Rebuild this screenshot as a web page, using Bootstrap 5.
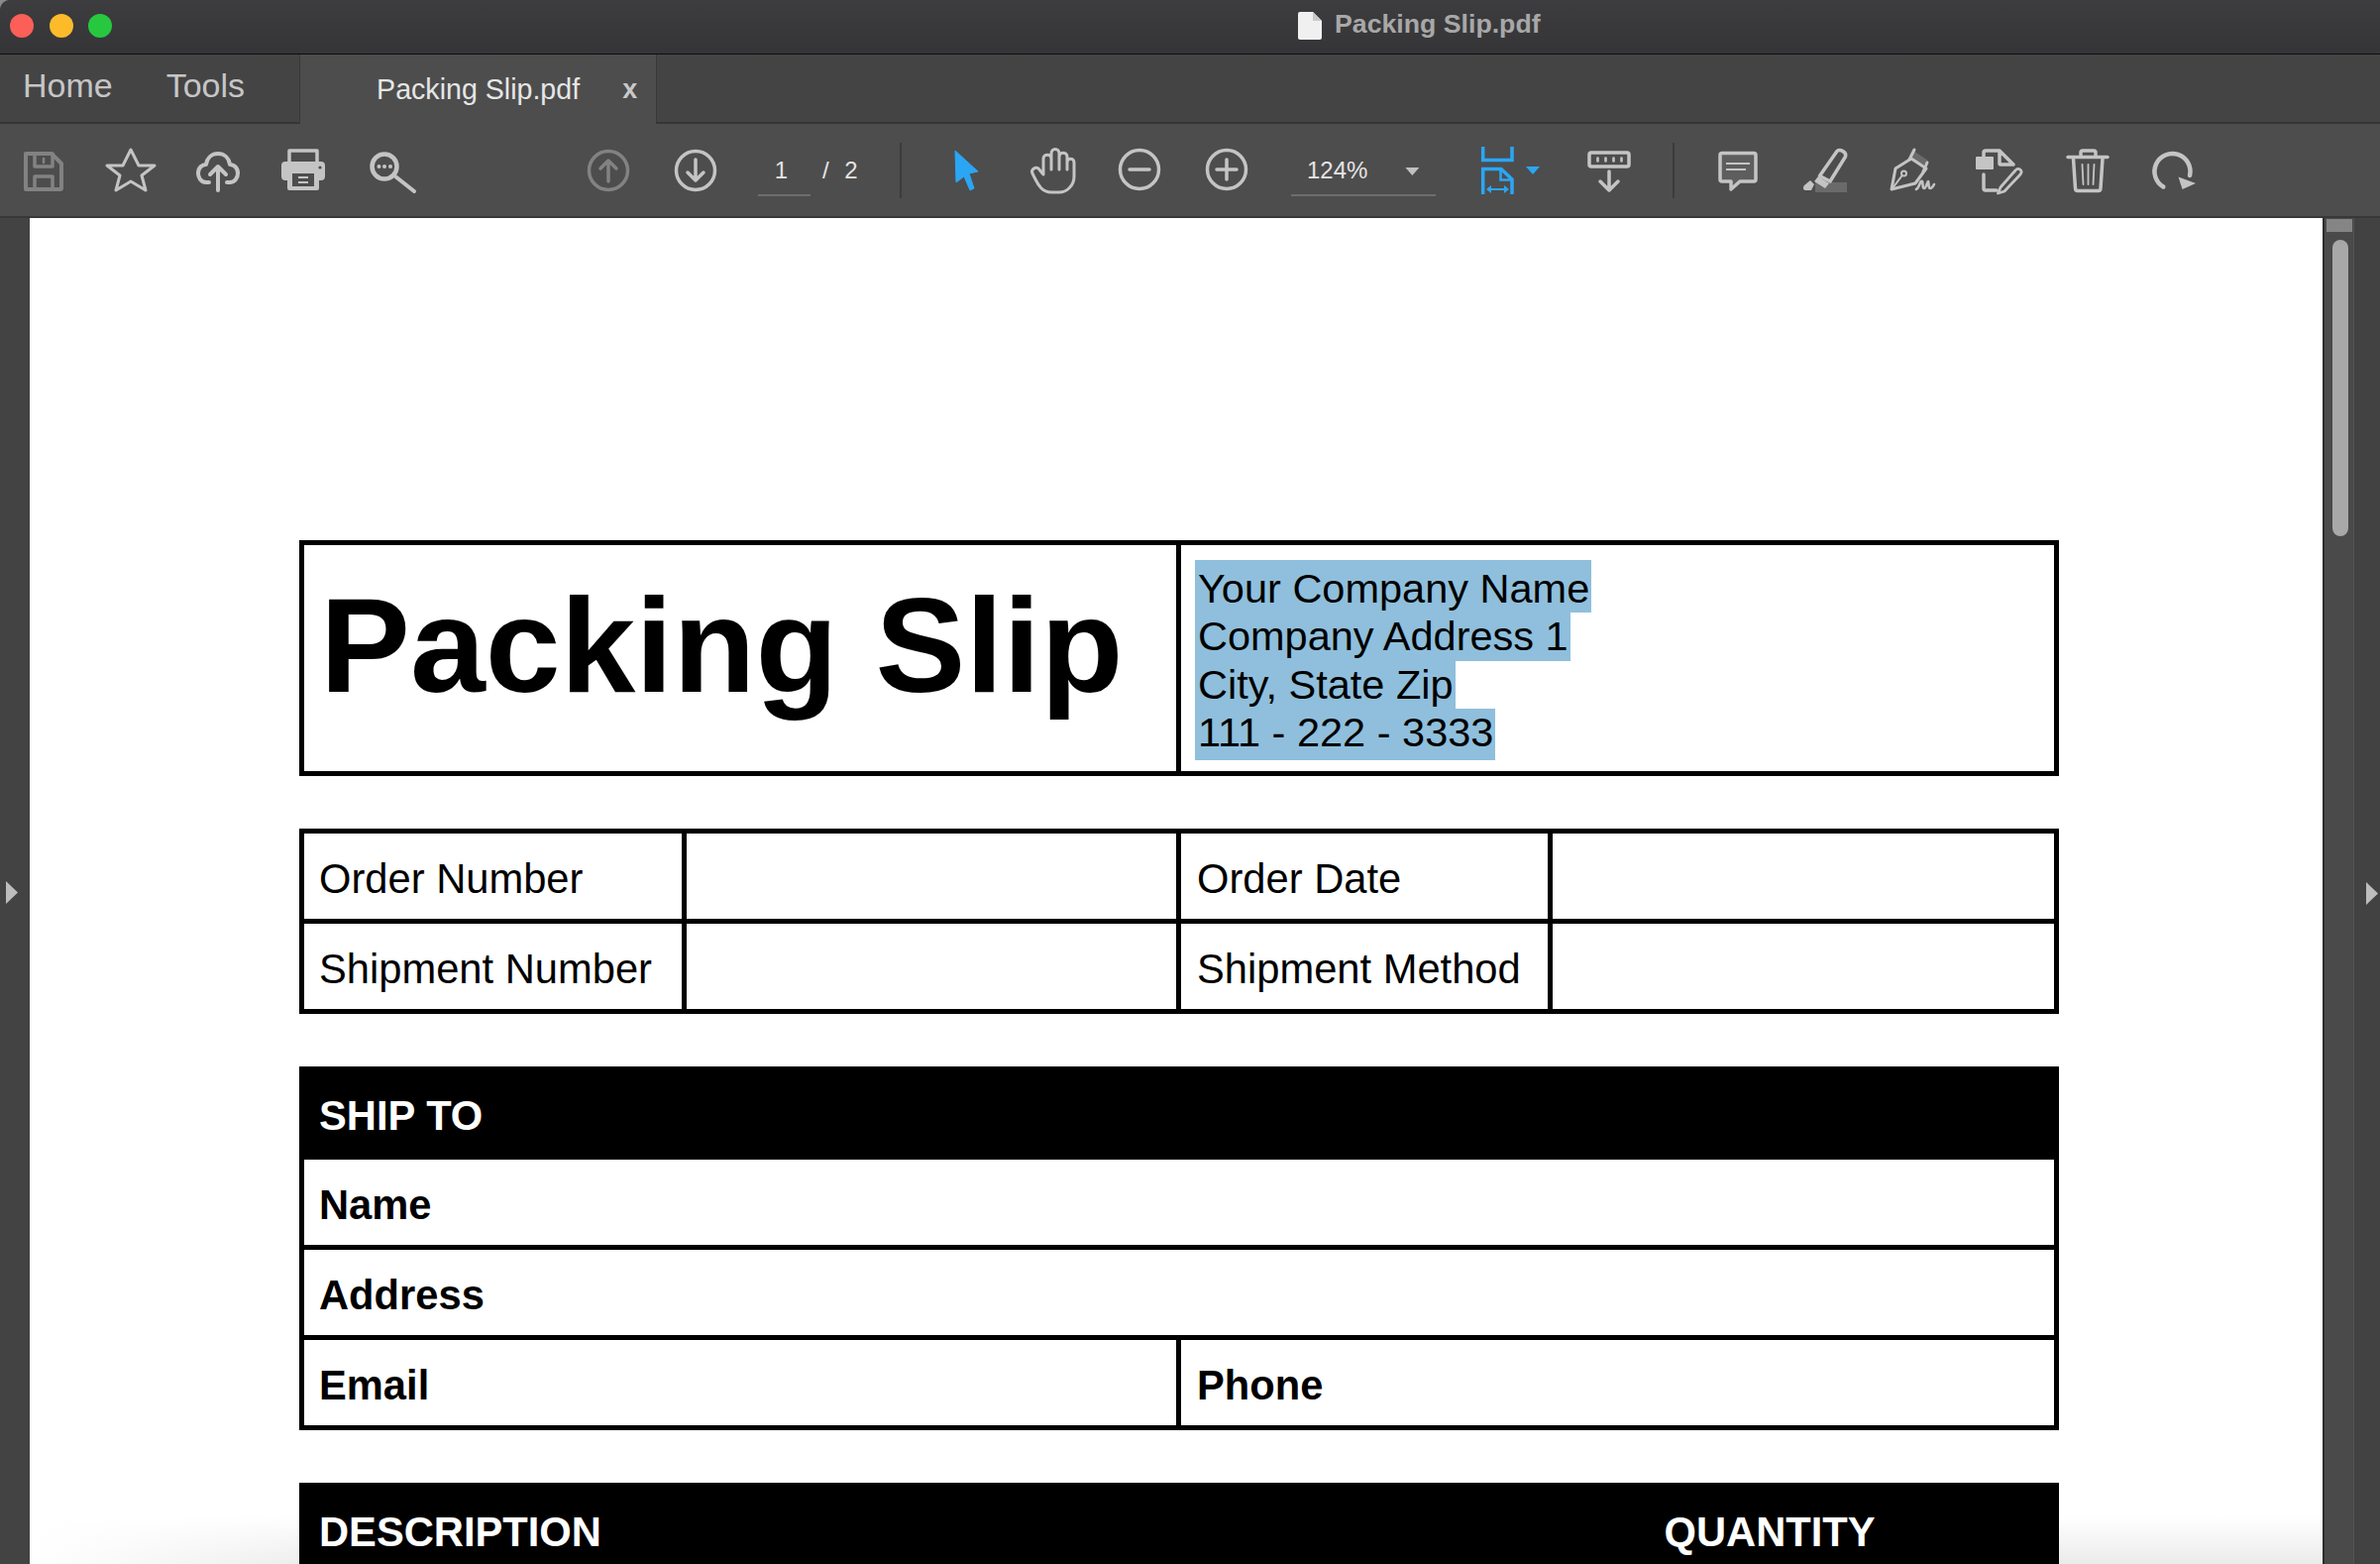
<!DOCTYPE html>
<html lang="en">
<head>
<meta charset="utf-8">
<title>Packing Slip.pdf</title>
<link rel="stylesheet" href="https://cdn.jsdelivr.net/npm/bootstrap@5.3.0/dist/css/bootstrap.min.css">
<style>
html,body{height:100%;margin:0;background:#8a8a8a;overflow:hidden}
body{font-family:"Liberation Sans",Arial,sans-serif}
.app-win{width:2402px;height:1578px;background:#444;border-top-left-radius:10px;overflow:hidden}
.title-strip{height:55px;background:linear-gradient(#3d3d3f,#353537);border-bottom:1px solid #0e0e0e;padding:0 0 2px 10px}
.dot{width:24px;height:24px}
.dot-r{background:#fb5f57}.dot-y{background:#fdbb2c;margin-left:16px}.dot-g{background:#27c840;margin-left:15px}
.doc-name{margin-left:1197px;gap:13px;font-size:26.7px;font-weight:700;color:#a8a8a8;line-height:1}
.doc-label{padding-bottom:4px}
.tab-strip{height:70px;background:#444;border-bottom:2px solid #353535}
.tab-link{font-size:34px;color:#c6c6c6;line-height:1;padding-bottom:6px}
.tab-home{margin-left:23px}.tab-tools{margin-left:54px}
.tab-active{margin-left:55px;width:361px;height:70px;background:#4d4d4d;border-left:1px solid #383838;border-right:1px solid #383838;padding-left:77px;font-size:28.6px;color:#e6e6e6;line-height:1;padding-top:1px}
.tab-x{margin-left:43px;font-size:27px;font-weight:700;color:#c8c8c8;line-height:1}
.tool-strip{height:95px;background:#4d4d4d;border-bottom:2px solid #383838;padding-top:15px}
.slot{width:88px;height:65px;flex:none;display:block;stroke-width:3.5}
.g{fill:none;stroke:#c4c4c4;stroke-linecap:round;stroke-linejoin:round}
.f{fill:#c4c4c4;stroke:none}
.dim{stroke:#828282}
.dimf{fill:#6a6a6a;stroke:none}
.blue{fill:none;stroke:#2ba6f5;stroke-linejoin:miter}
.bluef{fill:#2ba6f5;stroke:none}
.spc-up{margin-left:130px}
.field{height:43px;border-bottom:2px solid #6e6e6e;color:#e4e4e4;font-size:24px;line-height:1;padding-top:5px;flex:none;margin-top:15px}
.field-page{width:53px;margin-left:19px;text-align:center;padding-right:6px}
.page-total{margin-left:12px;width:78px;color:#e4e4e4;font-size:24px;line-height:1;padding-top:20px;word-spacing:9px;flex:none}
.vsep{width:2px;height:56px;background:#3b3b3b;margin-top:4px;flex:none}
.spc-arrow{margin-left:21px}
.field-zoom{width:146px;margin-left:20px;padding-left:16px;position:relative}
.zoom-caret{margin-left:38px;width:14px;height:8px;background:#c0c0c0;clip-path:polygon(0 0,100% 0,50% 100%);display:inline-block;vertical-align:3px}
.spc-fit{margin-left:18px}.spc-rule{margin-left:25px}.spc-sep{margin-left:20px}.spc-cmt{margin-left:20px}
.work-row{height:1358px}
.side-l{width:30px;background:#434343;flex:none}
.side-r{width:26px;background:#424242;flex:none}
.tri{width:12px;height:23px;background:#bdbdbd;clip-path:polygon(0 0,100% 50%,0 100%);display:block}
.side-l .tri{margin-left:6px;margin-top:669px}
.side-r .tri{margin-left:12px;margin-top:670px}
.vtrack{width:32px;background:#4a4a4a;border-left:2px solid #2c2c2c;border-right:1px solid #555;flex:none;padding:1px 0 0 2px}
.vbtn{width:26px;height:13px;background:#858585;display:block}
.vthumb{width:16px;height:299px;background:#a8a8a8;border-radius:8px;margin:8px 0 0 6px;display:block}
.sheet{width:2314px;flex:none;padding:325px 0 0 272px;overflow:hidden;
 background:linear-gradient(to right,#fff 0,rgba(255,255,255,0) 320px),linear-gradient(to bottom,#fff 0,#fff 1310px,#ebebeb 1358px)}
.pdf-tbl{width:1776px;border-collapse:collapse;table-layout:fixed;background:#fff;color:#000;font-size:41.7px;line-height:1}
.pdf-tbl td,.pdf-tbl th{border:5px solid #000;padding:5px 0 0 15px;vertical-align:middle;font-weight:400}
.pdf-tbl .blk{background:#000;color:#fff;font-weight:700}
.pdf-tbl .bd{font-weight:700}
.pdf-tbl .cell-mid{padding-left:16px}
.c-half{width:885px}
.c-a{width:386px}.c-b{width:499px}.c-c{width:375px}
.big-title{font-size:136.3px!important;font-weight:700!important;padding:0 0 26px 16px!important;line-height:1!important}
.h-head{height:233px}
.h-row{height:91px}
.h-black{height:89px}
.h-ship{height:91px}
.sel-line{display:block;width:fit-content;background:#8fbfdc;height:48.5px;line-height:48.5px;padding:0 2px 0 3px;box-sizing:content-box;font-size:41.5px}
.sel-line:first-child{padding-top:4.5px}
.sel-line:last-child{padding-bottom:3px}
.addr-cell{padding:4px 0 0 14px!important}
.m-b1{margin-bottom:53px}.m-b2{margin-bottom:53px}.m-b3{margin-bottom:53px}
.c-desc{width:1360px}
</style>
</head>
<body>
<div class="app-win d-flex flex-column">
  <div class="title-strip d-flex align-items-center">
    <span class="dot dot-r rounded-circle"></span><span class="dot dot-y rounded-circle"></span><span class="dot dot-g rounded-circle"></span>
    <span class="doc-name d-flex align-items-center">
      <svg width="24" height="28" viewBox="0 0 24 28"><path d="M2 0H15L24 9V26Q24 28 22 28H2Q0 28 0 26V2Q0 0 2 0Z" fill="#f0f0f0"/><path d="M15 0V9H24Z" fill="#c9c9c9"/></svg>
      <span class="doc-label">Packing Slip.pdf</span>
    </span>
  </div>
  <div class="tab-strip d-flex">
    <span class="tab-link tab-home align-self-center">Home</span>
    <span class="tab-link tab-tools align-self-center">Tools</span>
    <div class="tab-active d-flex align-items-center"><span>Packing Slip.pdf</span><span class="tab-x">x</span></div>
  </div>
  <div class="tool-strip d-flex align-items-start">
    <!-- save -->
    <svg class="slot" viewBox="0 0 88 65"><path class="g dim" stroke-width="4" d="M26 15H52L62 25V50Q62 51 61 51H26Q26 51 26 50Z"/><path class="g dim" stroke-width="3.500" d="M35 51V38H53V51M35 15V28H53V15"/><path class="g dim" stroke-width="2.500" d="M44 20V24"/></svg>
    <!-- star -->
    <svg class="slot" viewBox="0 0 88 65"><path class="g" stroke-width="3" d="M44 11L52 27L68 27L55 37L59 52L44 43L29 52L33 37L20 27L36 27Z"/></svg>
    <!-- cloud -->
    <svg class="slot" viewBox="0 0 88 65"><path class="g" stroke-width="4" d="M35 44H32C26 44 24 38 24 35C24 29 28 26 32 26C33 19 38 15 44 15C50 15 55 19 56 26C60 26 64 29 64 35C64 39 61 44 56 44H53"/><path class="g" stroke-width="4" d="M44 52V29M36 36L44 28L52 36"/></svg>
    <!-- print -->
    <svg class="slot" viewBox="2 0 88 65"><rect class="g" x="30" y="12" width="28" height="14"/><path class="f" d="M26 23H62Q66 23 66 27V38Q66 42 62 42H60V50Q60 52 58 52H30Q28 52 28 50V42H26Q22 42 22 38V27Q22 23 26 23Z"/><rect x="33" y="35" width="22" height="13" fill="#4d4d4d"/><path d="M39 39H49M39 44H49" stroke="#c4c4c4" stroke-width="1.8"/><circle cx="61" cy="29" r="1.6" fill="#4d4d4d"/></svg>
    <!-- search -->
    <svg class="slot" viewBox="-1 0 88 65"><circle class="g" stroke-width="4.500" cx="35" cy="28" r="12.500"/><path class="g" stroke-width="4" d="M46 38L65 53"/><circle class="f" cx="29.500" cy="28" r="2"/><circle class="f" cx="35" cy="28" r="2"/><circle class="f" cx="41" cy="28" r="2"/></svg>
    <!-- up -->
    <svg class="slot spc-up" viewBox="0 0 88 65"><circle class="g dim" cx="44" cy="32" r="19.500"/><path class="g dim" d="M44 43V22M36 30L44 22L52 30"/></svg>
    <!-- down -->
    <svg class="slot" viewBox="0 0 88 65"><circle class="g" cx="44" cy="32" r="19.500"/><path class="g" d="M44 21V42M36 34L44 42L52 34"/></svg>
    <div class="field field-page">1</div>
    <div class="page-total">/ 2</div>
    <div class="vsep"></div>
    <!-- select arrow -->
    <svg class="slot spc-arrow" viewBox="0 0 88 65"><path d="M33 12L56 33L47 35L52 50L48 52L42 38L34 44Z" fill="#2ba6f5" stroke="#2ba6f5" stroke-width="1" stroke-linejoin="round"/></svg>
    <!-- hand -->
    <svg class="slot" viewBox="0 0 88 65"><path class="g" stroke-width="3" d="M44 54H42C33 54 29 47 26 41L23 35C21 31 26 28 29 30L34 36V20C34 15 42 15 42 20V15C42 9 50 9 50 15V18C50 13 58 13 58 18V24C58 19 65 19 65 24V38C65 48 57 54 50 54ZM42 20V31M50 15V31M58 20V31"/></svg>
    <!-- minus -->
    <svg class="slot" viewBox="1 0 88 65"><circle class="g" cx="44" cy="31" r="19.500"/><path class="g" d="M34 31H54"/></svg>
    <!-- plus -->
    <svg class="slot" viewBox="1 0 88 65"><circle class="g" cx="44" cy="31" r="19.500"/><path class="g" d="M34 31H54M44 21V41"/></svg>
    <div class="field field-zoom">124%<span class="zoom-caret"></span></div>
    <!-- fit -->
    <svg class="slot spc-fit" viewBox="0 0 88 65"><path class="blue" d="M29.700 8V21.500H59V8"/><path class="blue" d="M29.700 56V30.500H48L59 41V56"/><path class="blue" stroke-width="2.500" d="M47.500 31V41.500H59"/><path class="blue" stroke-width="2" d="M35 51H54"/><path class="bluef" d="M33 51L38 47V55ZM56 51L51 47V55Z"/><path class="bluef" d="M73 28H87L80 36Z"/></svg>
    <!-- ruler -->
    <svg class="slot spc-rule" viewBox="0 0 88 65"><rect class="g" x="24" y="14" width="40" height="14" rx="2"/><path class="g" stroke-width="2.600" d="M32.500 19.500V22.500M40.500 19.500V22.500M48.500 19.500V22.500M56.500 19.500V22.500"/><path class="g" d="M44 33V52M35 43L44 52L53 43"/></svg>
    <div class="vsep spc-sep"></div>
    <!-- comment -->
    <svg class="slot spc-cmt" viewBox="0 0 88 65"><path d="M28 14.500H60Q62 14.500 62 16.500V41Q62 43 60 43H46L37 51V43H28Q26 43 26 41V16.500Q26 14.500 28 14.500Z" fill="#5e5e5e" stroke="#c4c4c4" stroke-width="3.500" stroke-linejoin="round"/><path d="M32 25H56M32 31H52" stroke="#c4c4c4" stroke-width="2"/></svg>
    <!-- highlighter -->
    <svg class="slot" viewBox="1 0 88 65"><rect class="dimf" x="35" y="44" width="32" height="10"/><path class="g" d="M57 12.500C60 10 67 13.500 65.500 18L50 43L39.500 37.500Z"/><path class="f" d="M38 38L49 45L45 50L34 43Z"/><path class="f" d="M30 42L34 46L31 52H26C23 52 22 50 24 47Z"/></svg>
    <!-- pen -->
    <svg class="slot" viewBox="1 0 88 65"><path class="dimf" d="M46 12L61 22L56 27L44 19Z"/><path class="g" stroke-width="3" d="M24 51L28 30L44 20L59 30L48 45Z"/><path class="g" stroke-width="3" d="M47 11L42 21M60 24L56 33"/><path class="g" stroke-width="2" d="M25 50L34 38"/><circle class="g" stroke-width="2" cx="36.500" cy="35" r="2.500"/><path class="g" stroke-width="2.600" d="M49 51C52 50 53 41 55 43C56 46 55 50 57 50C59 50 60 43 61 43C62 46 61 50 63 50C65 50 66 48 67 46"/></svg>
    <!-- edit -->
    <svg class="slot" viewBox="0 0 88 65"><rect class="f" x="20" y="18" width="18" height="13" rx="1"/><path class="g" d="M28 18V14Q28 12 30 12H44L58 26H45Q44 26 44 25V12"/><path class="g" d="M28 36V50Q28 52 30 52H41"/><path class="g" stroke-width="2.800" d="M60 32L45 49L42.500 55L49 53L65 36C68 32 63 28 60 32Z"/></svg>
    <!-- trash -->
    <svg class="slot" viewBox="-1 0 88 65"><path class="g" d="M24 18.500H64"/><path class="g" d="M37 17V14Q37 12 39 12H50Q52 12 52 14V17"/><path class="g" d="M29.500 20L31.500 50Q31.500 52.500 34 52.500H54.500Q57 52.500 57 50L59 20"/><path class="g" stroke-width="1.800" d="M38.500 26L39.500 46M44.500 26V46M50.500 26L49.500 46"/></svg>
    <!-- rotate -->
    <svg class="slot" viewBox="0 0 88 65"><path class="g" stroke-width="4.500" d="M33.300 48.500A18 18 0 1 1 60 37"/><path class="f" d="M48.500 38.500L66 45L52.500 51Z"/></svg>
  </div>
  <div class="work-row d-flex">
    <div class="side-l"><span class="tri"></span></div>
    <div class="sheet">
      <table class="pdf-tbl m-b1">
        <colgroup><col class="c-half"><col></colgroup>
        <tr class="h-head">
          <td class="big-title">Packing Slip</td>
          <td class="addr-cell"><span class="sel-line">Your Company Name</span><span class="sel-line">Company Address 1</span><span class="sel-line">City, State Zip</span><span class="sel-line">111 - 222 - 3333</span></td>
        </tr>
      </table>
      <table class="pdf-tbl m-b2">
        <colgroup><col class="c-a"><col class="c-b"><col class="c-c"><col></colgroup>
        <tr class="h-row"><td>Order Number</td><td></td><td class="cell-mid">Order Date</td><td></td></tr>
        <tr class="h-row"><td>Shipment Number</td><td></td><td class="cell-mid">Shipment Method</td><td></td></tr>
      </table>
      <table class="pdf-tbl m-b3">
        <colgroup><col class="c-half"><col></colgroup>
        <tr class="h-black"><td class="blk" colspan="2">SHIP TO</td></tr>
        <tr class="h-ship"><td class="bd" colspan="2">Name</td></tr>
        <tr class="h-ship"><td class="bd" colspan="2">Address</td></tr>
        <tr class="h-ship"><td class="bd">Email</td><td class="bd cell-mid">Phone</td></tr>
      </table>
      <table class="pdf-tbl">
        <colgroup><col class="c-desc"><col></colgroup>
        <tr class="h-black"><td class="blk border-end-0">DESCRIPTION</td><td class="blk border-start-0">QUANTITY</td></tr>
      </table>
    </div>
    <div class="vtrack"><span class="vbtn"></span><span class="vthumb"></span></div>
    <div class="side-r"><span class="tri"></span></div>
  </div>
</div>
<script src="https://cdn.jsdelivr.net/npm/bootstrap@5.3.0/dist/js/bootstrap.bundle.min.js"></script>
</body>
</html>
